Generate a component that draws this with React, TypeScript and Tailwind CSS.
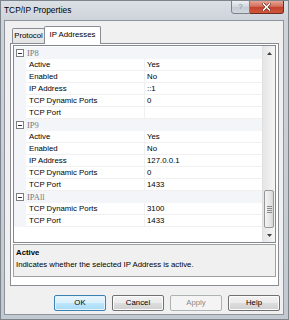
import React from "react";

type Row = { kind: "cat"; name: string } | { kind: "prop"; name: string; value: string };

const rows: Row[] = [
  { kind: "cat", name: "IP8" },
  { kind: "prop", name: "Active", value: "Yes" },
  { kind: "prop", name: "Enabled", value: "No" },
  { kind: "prop", name: "IP Address", value: "::1" },
  { kind: "prop", name: "TCP Dynamic Ports", value: "0" },
  { kind: "prop", name: "TCP Port", value: "" },
  { kind: "cat", name: "IP9" },
  { kind: "prop", name: "Active", value: "Yes" },
  { kind: "prop", name: "Enabled", value: "No" },
  { kind: "prop", name: "IP Address", value: "127.0.0.1" },
  { kind: "prop", name: "TCP Dynamic Ports", value: "0" },
  { kind: "prop", name: "TCP Port", value: "1433" },
  { kind: "cat", name: "IPAll" },
  { kind: "prop", name: "TCP Dynamic Ports", value: "3100" },
  { kind: "prop", name: "TCP Port", value: "1433" },
];

function MinusBox() {
  return (
    <div className="w-[8px] h-[8px] border border-[#7f7f7f] bg-white flex items-center justify-center">
      <div className="w-[4px] h-[1px] bg-[#333]" />
    </div>
  );
}

function Btn({ label, kind }: { label: string; kind?: "default" | "disabled" }) {
  if (kind === "disabled") {
    return (
      <div className="w-[52px] h-[16px] rounded-[2px] border border-[#adb2b5] bg-[#f4f4f4] flex items-center justify-center text-[#8a8a8a]">
        {label}
      </div>
    );
  }
  if (kind === "default") {
    return (
      <div className="w-[52px] h-[16px] rounded-[2px] border border-[#3c7fb1] bg-[linear-gradient(#eaf6fd_0%,#d9f0fc_50%,#bee6fd_51%,#a7d9f5_100%)] flex items-center justify-center text-black shadow-[inset_0_0_0_1px_#e5f4fc]">
        {label}
      </div>
    );
  }
  return (
    <div className="w-[52px] h-[16px] rounded-[2px] border border-[#707070] bg-[linear-gradient(#f2f2f2_0%,#ebebeb_50%,#dddddd_51%,#cfcfcf_100%)] flex items-center justify-center text-black shadow-[inset_0_0_0_1px_#fcfcfc]">
      {label}
    </div>
  );
}

export default function App() {
  return (
    <div
      className="w-[289px] h-[320px] relative overflow-hidden flex flex-col bg-[linear-gradient(#dbe0e5_0px,#cdd3d9_20px,#c3c9d0_100%)] border border-[#7d848c]"
      style={{ fontFamily: '"Liberation Sans", Arial, sans-serif' }}
    >
      {/* title bar */}
      <div className="h-[19px] shrink-0 relative">
        <span className="absolute left-[3px] top-[3px] text-[8.4px] leading-[13px] text-black">TCP/IP Properties</span>
        <div className="absolute right-[4px] top-[-1px] flex">
          <div className="w-[19px] h-[14px] rounded-bl-[3px] border border-[#7b8189] bg-[linear-gradient(#eef1f4,#cfd5dc_50%,#c3cad2_51%,#d3d9df)] flex items-center justify-center text-[8px] leading-none text-[#8a9099]">
            ?
          </div>
          <div className="w-[34px] h-[14px] rounded-br-[3px] border border-l-0 border-[#6e2a24] bg-[linear-gradient(#e8a493,#d3705c_45%,#c2412b_50%,#d0563b)] flex items-center justify-center">
            <svg width="9" height="8" viewBox="0 0 9 8">
              <path d="M1.5 1 L7.5 7 M7.5 1 L1.5 7" stroke="#5a1a12" strokeWidth="2.6" strokeLinecap="square" />
              <path d="M1.5 1 L7.5 7 M7.5 1 L1.5 7" stroke="#ffffff" strokeWidth="1.6" strokeLinecap="square" />
            </svg>
          </div>
        </div>
      </div>

      {/* client area */}
      <div className="ml-[3px] mr-[4px] mb-[4px] flex-1 bg-[#f0f0f0] border border-[#8d949c] flex flex-col text-[7.8px] text-black">
        {/* tabs */}
        <div className="h-[22px] shrink-0 flex items-end pl-[7px] relative">
          <div className="h-[15px] w-[33px] border border-b-0 border-[#898c95] bg-[linear-gradient(#f2f2f2,#e3e3e3)] rounded-t-[2px] flex items-center justify-center leading-none">
            Protocol
          </div>
          <div className="h-[18px] w-[57px] -ml-[1px] border border-b-0 border-[#898c95] bg-white rounded-t-[2px] flex items-start justify-center pt-[4px] leading-none relative z-10 -mb-[1px]">
            IP Addresses
          </div>
        </div>

        {/* panel */}
        <div className="ml-[5px] mr-[4px] h-[243px] shrink-0 border border-[#898c95] bg-white px-[2px] pt-[1px] flex flex-col">
          {/* grid */}
          <div className="h-[198px] shrink-0 border border-[#828790] flex">
            <div className="flex-1 flex flex-col bg-white pt-[1px]">
              {rows.map((r, i) =>
                r.kind === "cat" ? (
                  <div key={i} className="h-[12px] shrink-0 flex items-center bg-[#f3f5f9] ">
                    <div className="w-[12px] flex justify-center">
                      <MinusBox />
                    </div>
                    <span className="ml-[1px] text-[#7a7a7a] leading-none" style={{ fontFamily: '"Liberation Serif", serif', fontSize: "8.5px" }}>
                      {r.name}
                    </span>
                  </div>
                ) : (
                  <div key={i} className="h-[12px] shrink-0 flex">
                    <div className="w-[12px] bg-[#f3f5f9]" />
                    <div className="w-[119px] pl-[3px] border-b border-r border-[#f0f0f0] flex items-center leading-none">
                      {r.name}
                    </div>
                    <div className="flex-1 pl-[2px] border-b border-[#f0f0f0] flex items-center leading-none">
                      {r.value}
                    </div>
                  </div>
                )
              )}
            </div>
            {/* scrollbar */}
            <div className="w-[13px] shrink-0 bg-[linear-gradient(90deg,#e6e6e6,#f5f5f5)] border-l border-[#e0e0e0] flex flex-col">
              <div className="h-[14px] flex items-center justify-center">
                <svg width="5" height="3" viewBox="0 0 5 3">
                  <path d="M0 3 L2.5 0 L5 3 Z" fill="#404040" />
                </svg>
              </div>
              <div className="flex-1" />
              <div className="h-[38px] mx-[1px] rounded-[2px] border border-[#979797] bg-[linear-gradient(90deg,#f4f4f4,#e8e8e8_50%,#d8d8d8)] flex flex-col items-center justify-center gap-[1px]">
                <div className="w-[5px] h-[1px] bg-[#8a8a8a]" />
                <div className="w-[5px] h-[1px] bg-[#8a8a8a]" />
                <div className="w-[5px] h-[1px] bg-[#8a8a8a]" />
                <div className="w-[5px] h-[1px] bg-[#8a8a8a]" />
              </div>
              <div className="h-[14px] flex items-center justify-center">
                <svg width="5" height="3" viewBox="0 0 5 3">
                  <path d="M0 0 L2.5 3 L5 0 Z" fill="#404040" />
                </svg>
              </div>
            </div>
          </div>

          {/* description */}
          <div className="mt-[1px] h-[33px] shrink-0 border border-[#a0a0a0] bg-[#f0f0f0] px-[2px] pt-[3px] flex flex-col gap-[3px] leading-[9px]">
            <span className="font-bold">Active</span>
            <span>Indicates whether the selected IP Address is active.</span>
          </div>
        </div>

        {/* buttons */}
        <div className="flex justify-end gap-[6px] mr-[3px] mt-[9px]">
          <Btn label="OK" kind="default" />
          <Btn label="Cancel" />
          <Btn label="Apply" kind="disabled" />
          <Btn label="Help" />
        </div>
      </div>
    </div>
  );
}
